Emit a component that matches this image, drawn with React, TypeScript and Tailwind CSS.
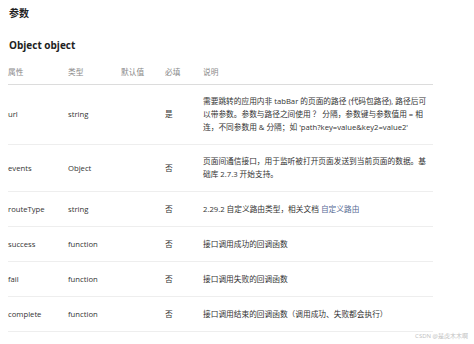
const rows = [
  {
    name: "url",
    type: "string",
    def: "",
    req: "是",
    desc: [
      "需要跳转的应用内非 tabBar 的页面的路径 (代码包路径), 路径后可",
      "以带参数。参数与路径之间使用 ？ 分隔，参数键与参数值用 = 相",
      "连，不同参数用 & 分隔；如 'path?key=value&key2=value2'",
    ],
  },
  {
    name: "events",
    type: "Object",
    def: "",
    req: "否",
    desc: ["页面间通信接口，用于监听被打开页面发送到当前页面的数据。基", "础库 2.7.3 开始支持。"],
  },
  { name: "routeType", type: "string", def: "", req: "否", desc: [] },
  { name: "success", type: "function", def: "", req: "否", desc: ["接口调用成功的回调函数"] },
  { name: "fail", type: "function", def: "", req: "否", desc: ["接口调用失败的回调函数"] },
  { name: "complete", type: "function", def: "", req: "否", desc: ["接口调用结束的回调函数（调用成功、失败都会执行）"] },
];

export default function App() {
  return (
    <div
      className="relative w-[474px] h-[344px] bg-white overflow-hidden text-[#333]"
      style={{ fontFamily: '"Open Sans", "Noto Sans CJK SC", sans-serif' }}
    >
      <div className="pl-[9px] pt-[6px]">
        <h2 className="text-[10px] leading-[14px] font-bold text-[#222]">参数</h2>
        <h3 className="mt-[18px] text-[10px] leading-[14px] font-bold text-[#222]">Object object</h3>
      </div>
      <div className="ml-[8px] mt-[14px] w-[425px] text-[7.7px] leading-[13px]">
        <div className="flex pb-[5px] border-b-[1.5px] border-[#dcdcdc] text-[#888]">
          <div className="w-[60px]">属性</div>
          <div className="w-[53px]">类型</div>
          <div className="w-[44px]">默认值</div>
          <div className="w-[38px]">必填</div>
          <div className="flex-1">说明</div>
        </div>
        {rows.map((r) => (
          <div
            key={r.name}
            className={
              r.desc.length > 1
                ? "flex items-center py-[10px] border-b border-[#eeeeee]"
                : "flex items-center py-[10.5px] border-b border-[#eeeeee]"
            }
          >
            <div className="w-[60px]">{r.name}</div>
            <div className="w-[53px]">{r.type}</div>
            <div className="w-[44px]">{r.def}</div>
            <div className="w-[38px]">{r.req}</div>
            <div className="flex-1 whitespace-nowrap">
              {r.name === "routeType" ? (
                <span>
                  2.29.2 自定义路由类型，相关文档 <span className="text-[#576b95]">自定义路由</span>
                </span>
              ) : (
                r.desc.map((l, i) => <div key={i}>{l}</div>)
              )}
            </div>
          </div>
        ))}
      </div>
      <div className="absolute right-[6px] bottom-[3px] text-[6px] text-[#c0c0c0]">CSDN @是虎木木啊</div>
    </div>
  );
}
